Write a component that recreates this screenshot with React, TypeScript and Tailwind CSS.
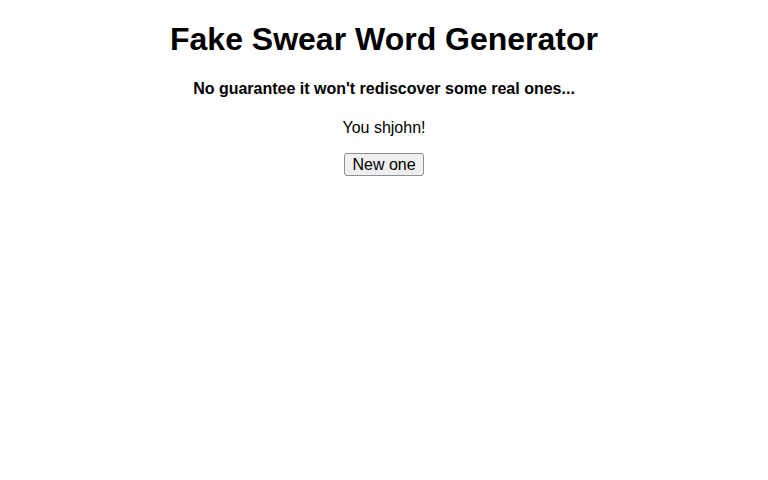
export default function App() {
  return (
    <div className="min-h-screen bg-white text-center text-black" style={{ fontFamily: '"Liberation Sans", Arial, sans-serif' }}>
      <h1 className="pt-[21px] text-[32px] font-bold leading-[37px]">Fake Swear Word Generator</h1>
      <h4 className="mt-[22px] text-[16px] font-bold leading-[18px]">No guarantee it won't rediscover some real ones...</h4>
      <p className="mt-[21px] text-[16px] leading-[18px]">You shjohn!</p>
      <div className="mt-[16px] flex justify-center">
        <button className="h-[23px] rounded-[3px] border border-[#8f8f8f] bg-[#efefef] px-[7px] text-[16px] leading-[18px] text-black">
          New one
        </button>
      </div>
    </div>
  );
}
